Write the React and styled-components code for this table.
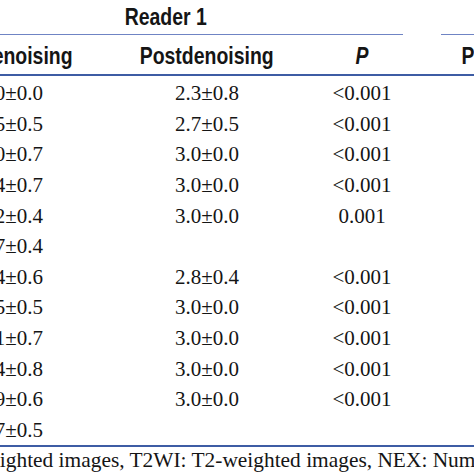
import React from "react";
import styled, { createGlobalStyle } from "styled-components";

const COLUMNS = "164px 228px 82px 38px 164px 228px 82px";
const INK = "#151515";
const RULE_LIGHT = "#6f84c4";
const RULE_DARK = "#3d5ca4";
const HEAD_FONT = `"Liberation Sans", Arial, sans-serif`;
const BODY_FONT = `"Liberation Serif", "Times New Roman", serif`;

const GlobalStyle = createGlobalStyle`
  html, body {
    margin: 0;
    padding: 0;
    background: #ffffff;
  }
`;

const Frame = styled.div`
  width: 474px;
  height: 474px;
  overflow: hidden;
  background: #ffffff;
  color: ${INK};
`;

const Sheet = styled.div`
  margin-left: -71px;
  width: max-content;
`;

const Band = styled.div`
  display: grid;
  grid-template-columns: ${COLUMNS};
`;

const TitleBand = styled(Band)`
  height: 34px;
`;

/* condensed bold heading face, narrowed from Liberation Sans */
const Narrow = styled.span`
  display: inline-block;
  transform: scaleX(0.81);
  transform-origin: center;
  white-space: nowrap;
`;

const GroupTitle = styled.div`
  grid-column: ${(p) => p.$start} / span 3;
  border-bottom: 1px solid ${RULE_LIGHT};
  font-family: ${HEAD_FONT};
  font-weight: 700;
  font-size: 24px;
  line-height: 34px;
  text-align: center;
`;

const HeadBand = styled(Band)`
  height: 40px;
  border-bottom: 2px solid ${RULE_DARK};
`;

const HeadCell = styled.div`
  font-family: ${HEAD_FONT};
  font-weight: 700;
  font-style: ${(p) => (p.$italic ? "italic" : "normal")};
  font-size: 24px;
  line-height: 44px;
  text-align: center;
`;

const Body = styled.div`
  padding-top: 2px;
  border-bottom: 2px solid ${RULE_DARK};
`;

const Row = styled(Band)`
  height: 30.6px;
  align-items: center;
`;

const Cell = styled.div`
  font-family: ${BODY_FONT};
  font-size: 21px;
  line-height: 30px;
  text-align: center;
`;

const Footnote = styled.p`
  margin: 0 0 0 -47px;
  white-space: nowrap;
  font-family: ${BODY_FONT};
  font-size: 21.4px;
  line-height: 26px;
`;

const rows = [
  ["1.0±0.0", "2.3±0.8", "<0.001"],
  ["2.5±0.5", "2.7±0.5", "<0.001"],
  ["2.0±0.7", "3.0±0.0", "<0.001"],
  ["2.4±0.7", "3.0±0.0", "<0.001"],
  ["2.2±0.4", "3.0±0.0", "0.001"],
  ["2.7±0.4", "", ""],
  ["1.4±0.6", "2.8±0.4", "<0.001"],
  ["2.5±0.5", "3.0±0.0", "<0.001"],
  ["2.1±0.7", "3.0±0.0", "<0.001"],
  ["2.4±0.8", "3.0±0.0", "<0.001"],
  ["1.9±0.6", "3.0±0.0", "<0.001"],
  ["2.7±0.5", "", ""],
];

const heads = ["Predenoising", "Postdenoising", "P", "", "Predenoising", "Postdenoising", "P"];

export default function App() {
  return (
    <>
      <GlobalStyle />
      <Frame>
        <Sheet>
          <TitleBand>
            <GroupTitle $start={1}>
              <Narrow>Reader 1</Narrow>
            </GroupTitle>
            <GroupTitle $start={5}>
              <Narrow>Reader 2</Narrow>
            </GroupTitle>
          </TitleBand>
          <HeadBand>
            {heads.map((h, i) => (
              <HeadCell key={i} $italic={h === "P"}>
                {h && <Narrow>{h}</Narrow>}
              </HeadCell>
            ))}
          </HeadBand>
          <Body>
            {rows.map(([pre, post, p], i) => (
              <Row key={i}>
                <Cell>{pre}</Cell>
                <Cell>{post}</Cell>
                <Cell>{p}</Cell>
                <Cell />
                <Cell />
                <Cell />
                <Cell />
              </Row>
            ))}
          </Body>
          <Footnote>
            T1WI: T1-weighted images, T2WI: T2-weighted images, NEX: Number of excitations
          </Footnote>
        </Sheet>
      </Frame>
    </>
  );
}
